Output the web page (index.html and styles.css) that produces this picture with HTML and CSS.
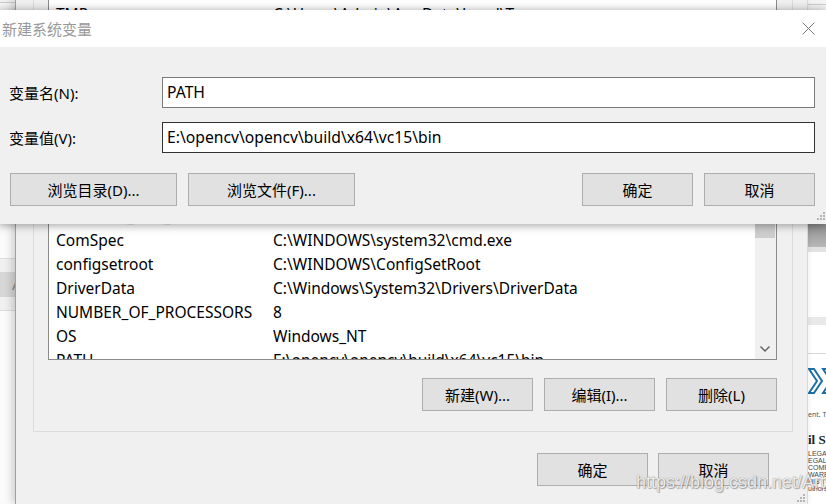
FILE: index.html
```html
<!DOCTYPE html>
<html lang="zh-CN">

<head>
    <meta charset="utf-8">
    <title>新建系统变量</title>
    <link rel="stylesheet" href="styles.css">
</head>

<body>
    <div class="desktop">
        <!-- Window behind, left edge -->
        <div class="side-left">
            <div class="sl-top"></div>
            <div class="sl-white"></div>
            <div class="sl-tab"><div class="sl-tab-inner"><span>A</span></div></div>
            <div class="sl-white2"></div>
        </div>

        <!-- Window behind, right edge -->
        <div class="side-right">
            <div class="sr-top"></div>
            <div class="sr-title"></div>
            <div class="sr-band"></div>
            <div class="sr-white"></div>
            <div class="sr-band2"></div>
            <div class="sr-white2"></div>
            <div class="sr-logo">
                <svg width="18" height="26" viewBox="0 0 18 26">
                    <path d="M1 1 H6 L14 13 L6 25 H1 L9 13 Z" fill="#fff" stroke="#1d6fa5" stroke-width="2" />
                    <path d="M15 1 H20 L28 13 L20 25 H15 L23 13 Z" fill="#fff" stroke="#1d6fa5" stroke-width="2" />
                </svg>
            </div>
            <div class="sr-small">ent. To</div>
            <div class="sr-head">il So</div>
            <div class="sr-legal">
                <div>LEGAL</div>
                <div>EGAL</div>
                <div>COMPA</div>
                <div>WARE</div>
                <div>HIS <b>I</b></div>
                <div>uthors</div>
            </div>
        </div>

        <!-- Environment variables window -->
        <div class="env-window">
            <div class="group user-group">
                <div class="var-list">
                    <div class="rows">
                        <div class="row"><span class="name">TEMP</span><span class="value">C:\Users\Admin\AppData\Local\Temp</span></div>
                        <div class="row"><span class="name">TMP</span><span class="value">C:\Users\Admin\AppData\Local\Temp</span></div>
                    </div>
                </div>
            </div>

            <div class="group sys-group">
                <div class="var-list">
                    <div class="rows">
                        <div class="row"><span class="name">ANDROID_HOME</span><span class="value">D:\Android</span></div>
                        <div class="row"><span class="name">ANDROID_SDK_HOME</span><span class="value">D:\Android</span></div>
                        <div class="row"><span class="name">ComSpec</span><span class="value">C:\WINDOWS\system32\cmd.exe</span></div>
                        <div class="row"><span class="name">configsetroot</span><span class="value">C:\WINDOWS\ConfigSetRoot</span></div>
                        <div class="row"><span class="name">DriverData</span><span class="value">C:\Windows\System32\Drivers\DriverData</span></div>
                        <div class="row"><span class="name">NUMBER_OF_PROCESSORS</span><span class="value">8</span></div>
                        <div class="row"><span class="name">OS</span><span class="value">Windows_NT</span></div>
                        <div class="row"><span class="name">PATH</span><span class="value">E:\opencv\opencv\build\x64\vc15\bin</span></div>
                    </div>
                    <div class="scrollbar">
                        <div class="thumb"></div>
                        <svg class="arrow-down" width="10" height="6" viewBox="0 0 10 6">
                            <path d="M0.5 0.5 L5 5 L9.5 0.5" fill="none" stroke="#606060" stroke-width="1.4" />
                        </svg>
                    </div>
                </div>
                <div class="button-row">
                    <button class="win-btn small">新建(W)...</button>
                    <button class="win-btn small">编辑(I)...</button>
                    <button class="win-btn small">删除(L)</button>
                </div>
            </div>

            <div class="button-row footer">
                <button class="win-btn small">确定</button>
                <button class="win-btn small">取消</button>
            </div>

            <svg class="grip env-grip" width="12" height="12" viewBox="0 0 12 12">
                <rect x="9" y="1" width="2" height="2" />
                <rect x="6" y="4" width="2" height="2" /><rect x="9" y="4" width="2" height="2" />
                <rect x="3" y="7" width="2" height="2" /><rect x="6" y="7" width="2" height="2" /><rect x="9" y="7" width="2" height="2" />
            </svg>
        </div>

        <!-- New system variable dialog -->
        <div class="dialog">
            <div class="dialog-title">
                <span>新建系统变量</span>
                <svg width="13" height="13" viewBox="0 0 13 13">
                    <path d="M0.5 0.5 L12.5 12.5 M12.5 0.5 L0.5 12.5" stroke="#777" stroke-width="1" />
                </svg>
            </div>
            <div class="dialog-body">
                <div class="field">
                    <label>变量名(N):</label>
                    <div class="text-box">PATH</div>
                </div>
                <div class="field">
                    <label>变量值(V):</label>
                    <div class="text-box focused">E:\opencv\opencv\build\x64\vc15\bin</div>
                </div>
                <div class="dialog-buttons">
                    <button class="win-btn wide">浏览目录(D)...</button>
                    <button class="win-btn wide">浏览文件(F)...</button>
                    <span class="spacer"></span>
                    <button class="win-btn small">确定</button>
                    <button class="win-btn small">取消</button>
                </div>
            </div>
            <svg class="grip dialog-grip" width="12" height="12" viewBox="0 0 12 12">
                <rect x="9" y="1" width="2" height="2" />
                <rect x="6" y="4" width="2" height="2" /><rect x="9" y="4" width="2" height="2" />
                <rect x="3" y="7" width="2" height="2" /><rect x="6" y="7" width="2" height="2" /><rect x="9" y="7" width="2" height="2" />
            </svg>
        </div>

        <div class="watermark">https://blog.csdn.net/Artp</div>
    </div>
</body>

</html>
```

FILE: styles.css
```css
* {
    box-sizing: border-box;
}

body {
    margin: 0;
    width: 826px;
    height: 504px;
    overflow: hidden;
    background-color: #ffffff;
    font-family: "Noto Sans", "Noto Sans CJK SC", sans-serif;
    font-size: 15px;
    color: #000000;
}

.desktop {
    position: relative;
    width: 826px;
    height: 504px;
    overflow: hidden;
}

/* Left edge of a window behind */
.side-left {
    position: absolute;
    left: 0;
    top: 0;
    width: 15px;
    height: 504px;
    display: flex;
    flex-direction: column;
}

.sl-top {
    height: 224px;
    background: linear-gradient(#f0f0f0 0 2px, #cccccc 2px 3px, #f6f6f6 3px);
}

.sl-white {
    height: 34px;
    background-color: #fbfbfb;
}

.sl-tab {
    height: 53px;
    padding: 13px 0 13px;
    background-color: #f0f0f0;
    border-top: 1px solid #dcdcdc;
    border-bottom: 1px solid #dcdcdc;
}

.sl-tab-inner {
    height: 25px;
    background-color: #d6d6d6;
    color: #8a8a8a;
    padding-left: 12px;
    line-height: 25px;
    overflow: hidden;
    white-space: nowrap;
}

.sl-white2 {
    flex: 1;
    background-color: #fbfbfb;
}

/* Right edge of a window behind */
.side-right {
    position: absolute;
    left: 808px;
    top: 0;
    width: 18px;
    height: 504px;
    display: flex;
    flex-direction: column;
    background-color: #ffffff;
    overflow: hidden;
}

.sr-top {
    height: 224px;
    background: linear-gradient(#f4f4f4 0 4px, #cfcfcf 4px 5px, #f4f4f4 5px);
}

.sr-title {
    height: 23px;
    background: linear-gradient(#8d8d8d, #b9b9b9);
}

.sr-band {
    height: 5px;
    background-color: #e2e2e2;
}

.sr-white {
    height: 65px;
}

.sr-band2 {
    height: 8px;
    background-color: #e9e9e9;
}

.sr-white2 {
    height: 29px;
    border-bottom: 1px solid #d8d8d8;
}

.sr-logo {
    height: 56px;
    padding-top: 14px;
}

.sr-logo svg {
    display: block;
}

.sr-small {
    font-size: 7px;
    color: #555;
    white-space: nowrap;
    height: 22px;
}

.sr-head {
    font-family: "Liberation Serif", serif;
    font-weight: bold;
    font-size: 13px;
    color: #222;
    white-space: nowrap;
    height: 18px;
}

.sr-legal {
    font-family: "Liberation Sans", sans-serif;
    font-size: 7px;
    line-height: 7px;
    color: #444;
    white-space: nowrap;
}

.sr-legal b {
    color: #b02020;
}

/* Environment variables window */
.env-window {
    position: absolute;
    left: 15px;
    top: 0;
    width: 793px;
    height: 504px;
    background-color: #f0f0f0;
    border-left: 1px solid #a0a0a0;
    border-right: 1px solid #d9d9d9;
    padding: 0 14px 0 17px;
    box-shadow: -3px 0 8px rgba(0, 0, 0, 0.18);
    display: flex;
    flex-direction: column;
}

.group {
    width: 760px;
    border: 1px solid #dcdcdc;
    padding: 0 15px 0 14px;
    flex-shrink: 0;
}

.user-group {
    margin-top: -40px;
    height: 190px;
    padding-top: 17px;
}

.user-group .var-list {
    height: 159px;
}

.sys-group {
    margin-top: 10px;
    padding-top: 19px;
    padding-bottom: 20px;
}

.var-list {
    height: 180px;
    border: 1px solid #8a8a8a;
    background-color: #ffffff;
    display: flex;
    overflow: hidden;
}

.rows {
    flex: 1;
    overflow: hidden;
    margin-top: -1px;
    font-size: 15.5px;
}

.row {
    height: 24px;
    display: flex;
    align-items: center;
    white-space: nowrap;
}

.name {
    width: 224px;
    padding-left: 7px;
    flex-shrink: 0;
}

.scrollbar {
    width: 21px;
    background-color: #f0f0f0;
    position: relative;
}

.thumb {
    margin: 17px 1px 0 0;
    height: 40px;
    background-color: #cdcdcd;
}

.arrow-down {
    position: absolute;
    left: 5px;
    bottom: 7px;
}

.button-row {
    display: flex;
    justify-content: flex-end;
    gap: 11px;
    margin-top: 18px;
}

.footer {
    gap: 10px;
    margin-top: 21px;
    padding-right: 24px;
}

.win-btn {
    height: 33px;
    background-color: #e1e1e1;
    border: 1px solid #adadad;
    font-family: inherit;
    font-size: 15px;
    color: #000000;
    padding: 0;
}

.win-btn.small {
    width: 111px;
}

.win-btn.wide {
    width: 167px;
}

.grip {
    position: absolute;
    fill: #b4b4b4;
}

.env-grip {
    right: 1px;
    bottom: -1px;
}

/* New system variable dialog */
.dialog {
    position: absolute;
    left: -2px;
    top: 10px;
    width: 828px;
    height: 214px;
    background-color: #f0f0f0;
    box-shadow: 0 1px 9px rgba(0, 0, 0, 0.4);
    display: flex;
    flex-direction: column;
}

.dialog-title {
    height: 37px;
    background-color: #ffffff;
    display: flex;
    align-items: center;
    justify-content: space-between;
    padding: 0 11px 0 4px;
    color: #999999;
}

.dialog-title svg {
    display: block;
}

.dialog-body {
    padding: 30px 11px 18px 11px;
}

.field {
    display: flex;
    align-items: center;
}

.field + .field {
    margin-top: 14px;
}

.field label {
    width: 153px;
    flex-shrink: 0;
}

.text-box {
    flex: 1;
    height: 31px;
    border: 1px solid #7a7a7a;
    background-color: #ffffff;
    padding-left: 4px;
    line-height: 28px;
    font-size: 15.7px;
    white-space: nowrap;
}

.text-box.focused {
    border-color: #333333;
}

.dialog-buttons {
    display: flex;
    gap: 11px;
    margin-top: 20px;
    margin-left: 1px;
}

.spacer {
    flex: 1;
}

.dialog-grip {
    right: 0;
    bottom: 1px;
}

.watermark {
    position: absolute;
    left: 636px;
    top: 472px;
    font-family: "Liberation Sans", sans-serif;
    font-size: 18px;
    color: rgba(255, 255, 255, 0.85);
    text-shadow: 0 0 1px #777, 1px 1px 1px rgba(0, 0, 0, 0.3);
    white-space: nowrap;
}
```
